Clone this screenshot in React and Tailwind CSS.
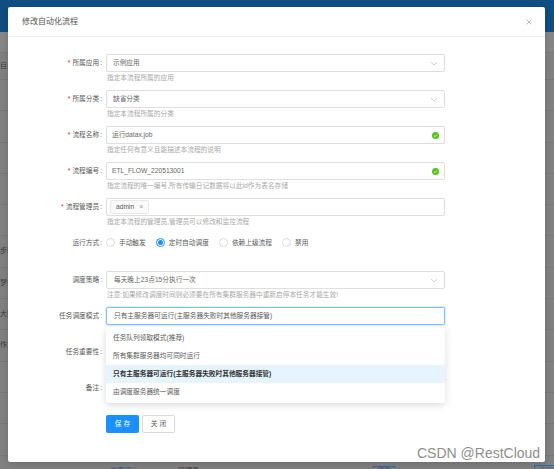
import React from "react";

const rows = [
  { name: "" },
  { name: "" },
  { name: "" },
  { name: "" },
  { name: "" },
  { name: "步骤" },
  { name: "梦想" },
  { name: "大数" },
  { name: "作业", tag: true },
  { name: "" },
  { name: "" },
  { name: "" },
  { name: "", last: true },
];

const Chevron = () => (
  <svg width="8" height="5" viewBox="0 0 8 5" className="shrink-0">
    <path d="M1 1 L4 4 L7 1" fill="none" stroke="#c4c4c4" strokeWidth="0.8" />
  </svg>
);

const Check = () => (
  <span className="w-[7px] h-[7px] rounded-full bg-[#52c41a] flex items-center justify-center shrink-0">
    <svg width="5" height="5" viewBox="0 0 5 5">
      <path d="M1 2.6 L2.1 3.6 L4 1.5" fill="none" stroke="#fff" strokeWidth="0.8" />
    </svg>
  </span>
);

const Label = ({ text, required }) => (
  <div className="h-[18px] flex items-center justify-end text-[#595959]">
    {required && <span className="text-[#f5222d] mr-[2px]">*</span>}
    <span>{text}</span>
    <span className="ml-[1px]">:</span>
  </div>
);

const Row = ({ label, required, help, children, className = "h-[36px]" }) => (
  <div className={`grid grid-cols-[94px_339px] gap-x-[4px] ${className}`}>
    <Label text={label} required={required} />
    <div className="relative">
      {children}
      {help && <div className="leading-[12px] pl-[1px] text-[#a8a8a8] whitespace-nowrap">{help}</div>}
    </div>
  </div>
);

const Select = ({ value, pad = "pl-[6px]" }) => (
  <div className={`h-[18px] border border-[#dedede] rounded-[2px] flex items-center justify-between ${pad} pr-[6px] text-[#666]`}>
    <span>{value}</span>
    <Chevron />
  </div>
);

const Input = ({ value }) => (
  <div className="h-[18px] border border-[#dedede] rounded-[2px] flex items-center justify-between pl-[5px] pr-[5px] text-[#666]">
    <span>{value}</span>
    <Check />
  </div>
);

const Radio = ({ label, checked }) => (
  <div className="flex items-center mr-[10px]">
    <span
      className={`w-[9px] h-[9px] rounded-full border bg-white flex items-center justify-center ${
        checked ? "border-[#1890ff]" : "border-[#d9d9d9]"
      }`}
    >
      {checked && <span className="w-[5px] h-[5px] rounded-full bg-[#1890ff]" />}
    </span>
    <span className="ml-[4px] text-[#595959]">{label}</span>
  </div>
);

const App = () => {
  return (
    <div className="relative w-[554px] h-[469px] overflow-hidden bg-[#808080] font-[family-name:Liberation_Sans,Noto_Sans_CJK_SC,sans-serif]">
      {/* page behind the mask */}
      <div className="h-[32px] bg-[#0f4e80]" />
      <div className="h-[21px] bg-[#858585] border-b border-[#787878]" />
      <div className="h-[27px] border-b border-[#777] flex items-center text-[7px] text-[#3f3f3f]">
        <span>目录</span>
      </div>
      {rows.map((r, i) => (
        <div key={i} className="h-[31.3px] border-b border-[#777] flex items-center text-[7px] text-[#3b3b3b] whitespace-nowrap">
          {r.last ? (
            <div className="flex items-center pt-[2px]">
              <span className="w-[110px]" />
              <span className="w-[68px] text-[#1c4a78] underline">仿真设计</span>
              <span className="w-[68px]">管理员</span>
              <span className="w-[127px] text-[6.5px]">2022-04-29 17:50:20</span>
              <span className="w-[161px]">
                <span className="border border-[#2a6aa8] px-[3px] text-[#1c4a78]">修改</span>
              </span>
              <span className="border border-[#2a6aa8] px-[3px] text-[#1c4a78]">运行流程</span>
            </div>
          ) : (
            <div className="flex items-center">
              <span>{r.name}</span>
              {r.tag && <span className="w-[6px] h-[8px] bg-[#3e7a25] ml-[1px]" />}
            </div>
          )}
        </div>
      ))}

      {/* modal */}
      <div className="absolute left-[8px] top-[7px] w-[537px] h-[455px] bg-white rounded-[2px] shadow-[0_2px_6px_rgba(0,0,0,0.15)] text-[6.7px]">
        <div className="h-[30px] border-b border-[#ececec] flex items-center justify-between pl-[14px] pr-[13px]">
          <span className="text-[8px] text-[#555]">修改自动化流程</span>
          <svg width="6" height="6" viewBox="0 0 6 6">
            <path d="M0.5 0.5 L5.5 5.5 M5.5 0.5 L0.5 5.5" stroke="#a0a0a0" strokeWidth="0.7" />
          </svg>
        </div>

        <div className="pt-[17px]">
          <Row label="所属应用" required help="指定本流程所属的应用">
            <Select value="示例应用" />
          </Row>
          <Row label="所属分类" required help="指定本流程所属的分类">
            <Select value="缺省分类" />
          </Row>
          <Row label="流程名称" required help="指定任何有意义且能描述本流程的说明">
            <Input value="运行datax.job" />
          </Row>
          <Row label="流程编号" required help="指定流程的唯一编号,所有传输日记数据将以此id作为表名存储">
            <Input value="ETL_FLOW_220513001" />
          </Row>
          <Row label="流程管理员" required help="指定本流程的管理员,管理员可以修改和监控流程">
            <div className="h-[18px] border border-[#dedede] rounded-[2px] flex items-center pl-[3px]">
              <span className="h-[14px] flex items-center gap-[5px] px-[5px] bg-[#fafafa] border border-[#e8e8e8] rounded-[2px] text-[#595959]">
                admin <span className="text-[#999]">×</span>
              </span>
            </div>
          </Row>
          <Row label="运行方式" className="h-[37px]">
            <div className="h-[18px] flex items-center">
              <Radio label="手动触发" />
              <Radio label="定时自动调度" checked />
              <Radio label="依赖上级流程" />
              <Radio label="禁用" />
            </div>
          </Row>
          <Row label="调度策略" help="注意:如果修改调度时间则必须要在所有集群服务器中重新启停本任务才能生效!">
            <Select value="每天晚上23点15分执行一次" pad="pl-[7px]" />
          </Row>
          <Row label="任务调度模式">
            <div className="h-[18px] border border-[#7fbfff] rounded-[2px] flex items-center pl-[7px] text-[#595959] shadow-[0_0_0_1px_rgba(24,144,255,0.12)]">
              只有主服务器可运行(主服务器失败时其他服务器接管)
            </div>
            <div className="absolute left-0 top-[20px] w-full z-10 bg-white rounded-[2px] py-[2px] shadow-[0_2px_7px_rgba(0,0,0,0.15)] text-[#595959]">
              <div className="h-[18px] flex items-center px-[7px]">任务队列领取模式(推荐)</div>
              <div className="h-[18px] flex items-center px-[7px]">所有集群服务器均可同时运行</div>
              <div className="h-[18px] flex items-center px-[7px] bg-[#e6f4ff] font-semibold text-[#333]">
                只有主服务器可运行(主服务器失败时其他服务器接管)
              </div>
              <div className="h-[18px] flex items-center px-[7px]">由调度服务器统一调度</div>
            </div>
          </Row>
          <Row label="任务重要性">
            <Select value="" />
          </Row>
          <Row label="备注">
            <div className="h-[18px] border border-[#dedede] rounded-[2px]" />
          </Row>
          <div className="grid grid-cols-[94px_339px] gap-x-[4px]">
            <div />
            <div className="flex gap-[3px]">
              <button className="w-[33px] h-[18px] rounded-[2px] bg-[#1890ff] text-white tracking-[2px] pl-[2px]">保存</button>
              <button className="w-[33px] h-[18px] rounded-[2px] border border-[#d9d9d9] bg-white text-[#595959] tracking-[2px] pl-[2px]">关闭</button>
            </div>
          </div>
        </div>
      </div>

      {/* watermark */}
      <div className="absolute left-[417px] top-[446px] text-[14px] leading-[14px] text-[#8e8e8e] whitespace-nowrap">
        CSDN @RestCloud
      </div>
    </div>
  );
};

export default App;
